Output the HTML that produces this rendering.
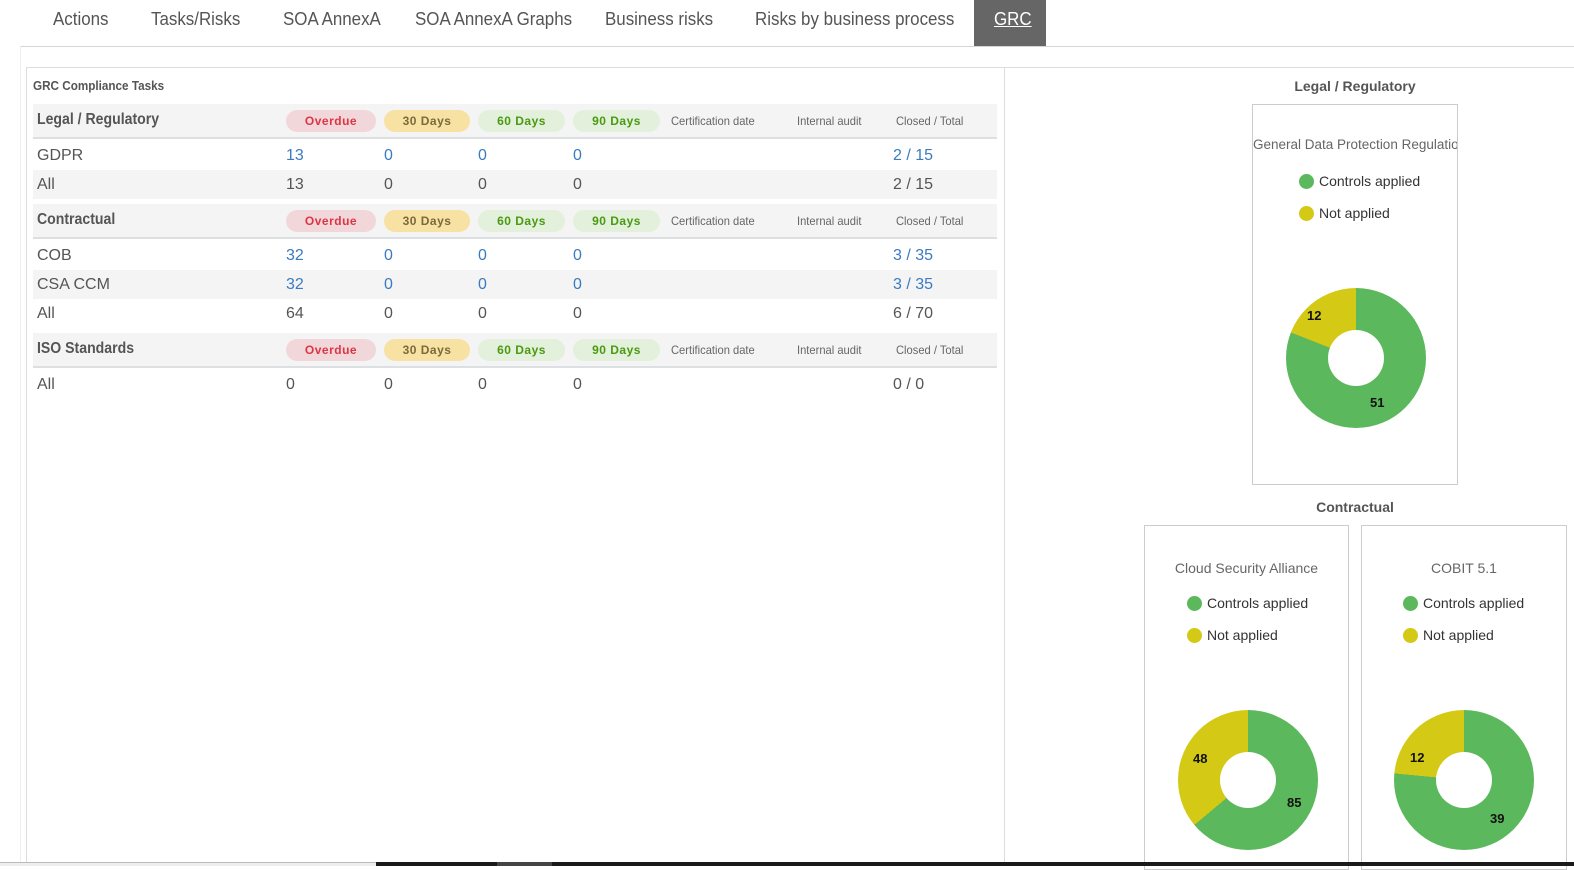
<!DOCTYPE html>
<html><head><meta charset="utf-8">
<style>
*{margin:0;padding:0;box-sizing:border-box}
body{width:1574px;height:866px;overflow:hidden;background:#fff;position:relative;font-family:"Liberation Sans Narrow","Liberation Sans",sans-serif;color:#555}
.a{position:absolute;white-space:nowrap}
.tab{position:absolute;top:9px;font-size:18px;color:#555;transform:scaleX(.94);transform-origin:left}
.hdr{position:absolute;left:33px;width:964px;height:35px;background:#f4f4f4;border-bottom:2px solid #dde0e3}
.row{position:absolute;left:33px;width:964px;height:29px}
.g{background:#f4f4f4}
.pill{position:absolute;height:22px;border-radius:11px;font-size:12px;font-weight:bold;text-align:center;line-height:22px;letter-spacing:.5px}
.sm{position:absolute;font-size:12px;color:#666;top:10px;transform:scaleX(.93);transform-origin:left}
.c{position:absolute;font-size:16px;top:5px}
.b{color:#3a7bc0}
.box{position:absolute;border:1px solid #ccc;background:#fff}
.ct{position:absolute;width:100%;text-align:center;font-family:"Liberation Sans",sans-serif;font-size:14px;color:#666;white-space:nowrap;overflow:hidden}
.lg{position:absolute;font-family:"Liberation Sans",sans-serif;font-size:14px;color:#333}
.dot{display:inline-block;width:15px;height:15px;border-radius:50%;vertical-align:-3px;margin-right:5px}
.donut{position:absolute;width:140px;height:140px;border-radius:50%}
.donut::after{content:"";position:absolute;left:42px;top:42px;width:56px;height:56px;border-radius:50%;background:#fff}
.n{position:absolute;font-family:"Liberation Sans",sans-serif;font-size:13px;font-weight:bold;color:#111}
</style></head><body>
<div class="tab" style="left:53px">Actions</div>
<div class="tab" style="left:151px">Tasks/Risks</div>
<div class="tab" style="left:283px">SOA AnnexA</div>
<div class="tab" style="left:415px">SOA AnnexA Graphs</div>
<div class="tab" style="left:605px">Business risks</div>
<div class="tab" style="left:755px">Risks by business process</div>
<div class="a" style="left:974px;top:0;width:72px;height:46px;background:#666"></div>
<div class="tab" style="left:994px;color:#fff;text-decoration:underline">GRC</div>
<div class="a" style="left:20px;top:46px;width:1554px;height:1px;background:#d5d5d5"></div>
<div class="a" style="left:20px;top:46px;width:1px;height:816px;background:#eee"></div>
<div class="a" style="left:26px;top:67px;width:1548px;height:1px;background:#ddd"></div>
<div class="a" style="left:26px;top:67px;width:1px;height:795px;background:#ddd"></div>
<div class="a" style="left:1004px;top:67px;width:1px;height:795px;background:#ddd"></div>
<div class="a" style="left:33px;top:78px;font-size:13px;font-weight:bold;color:#555;transform:scaleX(.9);transform-origin:left">GRC Compliance Tasks</div>

<div class="hdr" style="top:104px"></div>
<div class="hdr" style="top:204px"></div>
<div class="hdr" style="top:333px"></div>

<div id="s"></div>
<script>
function hdr(top,name){
 let h='<div class="a" style="left:37px;top:'+(top+7)+'px;font-size:16px;font-weight:bold;color:#555;transform:scaleX(.88);transform-origin:left">'+name+'</div>';
 h+='<div class="pill" style="left:286px;top:'+(top+6)+'px;width:90px;background:#f2d7da;color:#dc3545">Overdue</div>';
 h+='<div class="pill" style="left:384px;top:'+(top+6)+'px;width:86px;background:#f7e2a4;color:#7a6a3a">30 Days</div>';
 h+='<div class="pill" style="left:478px;top:'+(top+6)+'px;width:87px;background:#e2f0dc;color:#4a9a10">60 Days</div>';
 h+='<div class="pill" style="left:573px;top:'+(top+6)+'px;width:87px;background:#e2f0dc;color:#4a9a10">90 Days</div>';
 h+='<div class="sm" style="left:671px;top:'+(top+10)+'px">Certification date</div>';
 h+='<div class="sm" style="left:797px;top:'+(top+10)+'px">Internal audit</div>';
 h+='<div class="sm" style="left:896px;top:'+(top+10)+'px">Closed / Total</div>';
 return h;
}
function row(top,g,name,v,ct,blue){
 let cls=blue?'c b':'c';
 let h='<div class="row'+(g?' g':'')+'" style="top:'+top+'px"></div>';
 h+='<div class="c" style="left:37px;top:'+(top+6)+'px">'+name+'</div>';
 [286,384,478,573].forEach((x,i)=>{h+='<div class="'+cls+'" style="left:'+x+'px;top:'+(top+6)+'px">'+v[i]+'</div>'});
 h+='<div class="'+cls+'" style="left:893px;top:'+(top+6)+'px">'+ct+'</div>';
 return h;
}
let s='';
s+=hdr(104,'Legal / Regulatory');
s+=row(141,0,'GDPR',[13,0,0,0],'2 / 15',1);
s+=row(170,1,'All',[13,0,0,0],'2 / 15',0);
s+=hdr(204,'Contractual');
s+=row(241,0,'COB',[32,0,0,0],'3 / 35',1);
s+=row(270,1,'CSA CCM',[32,0,0,0],'3 / 35',1);
s+=row(299,0,'All',[64,0,0,0],'6 / 70',0);
s+=hdr(333,'ISO Standards');
s+=row(370,0,'All',[0,0,0,0],'0 / 0',0);
document.getElementById('s').outerHTML=s;
</script>

<div class="a" style="left:1255px;width:200px;top:78px;text-align:center;font-size:14px;font-weight:bold;color:#555">Legal / Regulatory</div>
<div class="box" style="left:1252px;top:104px;width:206px;height:381px">
 <div class="ct" style="top:32px;font-size:13.5px">General Data Protection Regulation</div>
 <div class="lg" style="left:46px;top:68px"><span class="dot" style="background:#5cb85c"></span>Controls applied</div>
 <div class="lg" style="left:46px;top:100px"><span class="dot" style="background:#d4c914"></span>Not applied</div>
 <div class="donut" style="left:33px;top:183px;background:conic-gradient(#5cb85c 0 80.95%,#d4c914 80.95% 100%)"></div>
 <div class="n" style="left:54px;top:203px">12</div>
 <div class="n" style="left:117px;top:290px">51</div>
</div>
<div class="a" style="left:1255px;width:200px;top:499px;text-align:center;font-size:14px;font-weight:bold;color:#555">Contractual</div>
<div class="box" style="left:1144px;top:525px;width:205px;height:345px">
 <div class="ct" style="top:34px">Cloud Security Alliance</div>
 <div class="lg" style="left:42px;top:69px"><span class="dot" style="background:#5cb85c"></span>Controls applied</div>
 <div class="lg" style="left:42px;top:101px"><span class="dot" style="background:#d4c914"></span>Not applied</div>
 <div class="donut" style="left:33px;top:184px;background:conic-gradient(#5cb85c 0 63.9%,#d4c914 63.9% 100%)"></div>
 <div class="n" style="left:48px;top:225px">48</div>
 <div class="n" style="left:142px;top:269px">85</div>
</div>
<div class="box" style="left:1361px;top:525px;width:206px;height:345px">
 <div class="ct" style="top:34px">COBIT 5.1</div>
 <div class="lg" style="left:41px;top:69px"><span class="dot" style="background:#5cb85c"></span>Controls applied</div>
 <div class="lg" style="left:41px;top:101px"><span class="dot" style="background:#d4c914"></span>Not applied</div>
 <div class="donut" style="left:32px;top:184px;background:conic-gradient(#5cb85c 0 76.5%,#d4c914 76.5% 100%)"></div>
 <div class="n" style="left:48px;top:224px">12</div>
 <div class="n" style="left:128px;top:285px">39</div>
</div>
<div class="a" style="left:0;top:862px;width:376px;height:4px;background:#eee;border-top:1px solid #bbb"></div>
<div class="a" style="left:376px;top:862px;width:1198px;height:4px;background:#1a1a1a"></div>
<div class="a" style="left:497px;top:862px;width:55px;height:4px;background:#444"></div>
</body></html>
